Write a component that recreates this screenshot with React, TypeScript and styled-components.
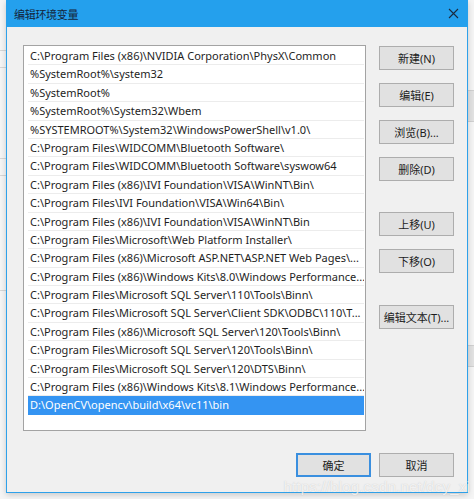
import React from 'react';
import styled, { createGlobalStyle } from 'styled-components';

const GlobalStyle = createGlobalStyle`
  html, body {
    margin: 0;
    padding: 0;
    width: 474px;
    height: 499px;
    overflow: hidden;
    background: #f4f4f4;
  }
`;

const UI_FONT = `"Noto Sans", "Noto Sans CJK SC", sans-serif`;

const Desktop = styled.div`
  position: relative;
  width: 474px;
  height: 499px;
  background: #f5f5f5;
  overflow: hidden;
`;

// faint pieces of the window lying behind the dialog
const BackLine = styled.div<{ top: number; side: 'left' | 'right' }>`
  position: absolute;
  top: ${({ top }) => top}px;
  ${({ side }) => (side === 'left' ? 'left: 0;' : 'right: 0;')}
  width: 8px;
  height: 1px;
  background: #d6d6d6;
`;

const BackBlock = styled.div<{ top: number; height: number }>`
  position: absolute;
  top: ${({ top }) => top}px;
  right: 0;
  width: 6px;
  height: ${({ height }) => height}px;
  background: #e2e2e2;
  border-top: 1px solid #d0d0d0;
  border-bottom: 1px solid #d0d0d0;
`;

const Window = styled.div`
  position: absolute;
  left: 6px;
  top: 0;
  width: 462px;
  height: 493px;
  box-sizing: border-box;
  border: 1px solid #2ea1ea;
  border-top: none;
  background: #f0f0f0;
  box-shadow: 0 2px 6px rgba(0, 0, 0, 0.18);
  display: flex;
  flex-direction: column;
  font-family: ${UI_FONT};
`;

const TitleBar = styled.div`
  height: 27px;
  margin: 0 -1px;
  background: #24a0ed;
  display: flex;
  align-items: center;
  justify-content: space-between;
  padding: 0 9px 0 8px;
  flex-shrink: 0;
`;

const Title = styled.span`
  font-family: "Noto Sans CJK SC", sans-serif;
  font-size: 11px;
  color: #14253a;
  letter-spacing: -0.3px;
`;

const CloseIcon = () => (
  <svg width="11" height="11" viewBox="0 0 11 11">
    <path d="M1 1 L10 10 M10 1 L1 10" stroke="#1b2b40" strokeWidth="1.1" fill="none" />
  </svg>
);

const Body = styled.div`
  flex: 1;
  display: flex;
  flex-direction: column;
  padding: 18px 12px 15px 16px;
`;

const Main = styled.div`
  display: flex;
  gap: 13px;
`;

const PathList = styled.div`
  width: 343px;
  height: 386px;
  box-sizing: border-box;
  background: #ffffff;
  border: 1px solid #a3a3a3;
  padding: 1px 1px 0 4px;
  overflow: hidden;
`;

const PathRow = styled.div<{ selected?: boolean }>`
  height: 18.4px;
  box-sizing: border-box;
  line-height: 17.4px;
  padding-left: 2px;
  font-size: 11px;
  white-space: nowrap;
  overflow: hidden;
  color: ${({ selected }) => (selected ? '#ffffff' : '#1e1e1e')};
  background: ${({ selected }) => (selected ? '#3494f2' : 'transparent')};
  border-bottom: 1px solid ${({ selected }) => (selected ? '#3494f2' : '#ececec')};
`;

const ButtonColumn = styled.div`
  display: flex;
  flex-direction: column;
  padding-top: 1px;
`;

const Button = styled.button<{ primary?: boolean; spaced?: number }>`
  width: 75px;
  height: 24px;
  margin-top: ${({ spaced }) => spaced ?? 0}px;
  box-sizing: border-box;
  background: #e1e1e1;
  border: ${({ primary }) => (primary ? '2px solid #3a8fdf' : '1px solid #adadad')};
  color: #1c1c1c;
  font-family: ${UI_FONT};
  font-size: 11px;
  padding: 0;
  display: flex;
  align-items: center;
  justify-content: center;
`;

const Footer = styled.div`
  margin-top: auto;
  display: flex;
  justify-content: flex-end;
  gap: 8px;
  padding-right: 1px;
`;

const Watermark = styled.div`
  position: absolute;
  right: 4px;
  bottom: 4px;
  font-family: "Liberation Sans", sans-serif;
  font-size: 15px;
  color: rgba(255, 255, 255, 0.75);
  text-shadow: 0 0 1px rgba(150, 150, 150, 0.5);
  letter-spacing: 0.2px;
  pointer-events: none;
`;

const paths = [
  'C:\\Program Files (x86)\\NVIDIA Corporation\\PhysX\\Common',
  '%SystemRoot%\\system32',
  '%SystemRoot%',
  '%SystemRoot%\\System32\\Wbem',
  '%SYSTEMROOT%\\System32\\WindowsPowerShell\\v1.0\\',
  'C:\\Program Files\\WIDCOMM\\Bluetooth Software\\',
  'C:\\Program Files\\WIDCOMM\\Bluetooth Software\\syswow64',
  'C:\\Program Files (x86)\\IVI Foundation\\VISA\\WinNT\\Bin\\',
  'C:\\Program Files\\IVI Foundation\\VISA\\Win64\\Bin\\',
  'C:\\Program Files (x86)\\IVI Foundation\\VISA\\WinNT\\Bin',
  'C:\\Program Files\\Microsoft\\Web Platform Installer\\',
  'C:\\Program Files (x86)\\Microsoft ASP.NET\\ASP.NET Web Pages\\...',
  'C:\\Program Files (x86)\\Windows Kits\\8.0\\Windows Performance...',
  'C:\\Program Files\\Microsoft SQL Server\\110\\Tools\\Binn\\',
  'C:\\Program Files\\Microsoft SQL Server\\Client SDK\\ODBC\\110\\T...',
  'C:\\Program Files (x86)\\Microsoft SQL Server\\120\\Tools\\Binn\\',
  'C:\\Program Files\\Microsoft SQL Server\\120\\Tools\\Binn\\',
  'C:\\Program Files\\Microsoft SQL Server\\120\\DTS\\Binn\\',
  'C:\\Program Files (x86)\\Windows Kits\\8.1\\Windows Performance...',
  'D:\\OpenCV\\opencv\\build\\x64\\vc11\\bin',
];

const sideButtons: { label: string; gap: number }[] = [
  { label: '新建(N)', gap: 0 },
  { label: '编辑(E)', gap: 13 },
  { label: '浏览(B)...', gap: 13 },
  { label: '删除(D)', gap: 13 },
  { label: '上移(U)', gap: 31 },
  { label: '下移(O)', gap: 13 },
  { label: '编辑文本(T)...', gap: 32 },
];

export default function App() {
  return (
    <Desktop>
      <GlobalStyle />
      <BackLine side="left" top={50} />
      <BackLine side="left" top={67} />
      <BackLine side="left" top={158} />
      <BackLine side="left" top={175} />
      <BackLine side="left" top={290} />
      <BackBlock top={90} height={30} />
      <BackBlock top={345} height={20} />
      <Window>
        <TitleBar>
          <Title>编辑环境变量</Title>
          <CloseIcon />
        </TitleBar>
        <Body>
          <Main>
            <PathList>
              {paths.map((p, i) => (
                <PathRow key={p} selected={i === paths.length - 1}>
                  {p}
                </PathRow>
              ))}
            </PathList>
            <ButtonColumn>
              {sideButtons.map((b) => (
                <Button key={b.label} spaced={b.gap}>
                  {b.label}
                </Button>
              ))}
            </ButtonColumn>
          </Main>
          <Footer>
            <Button primary>确定</Button>
            <Button>取消</Button>
          </Footer>
        </Body>
      </Window>
      <Watermark>https://blog.csdn.net/dcy_xi</Watermark>
    </Desktop>
  );
}
